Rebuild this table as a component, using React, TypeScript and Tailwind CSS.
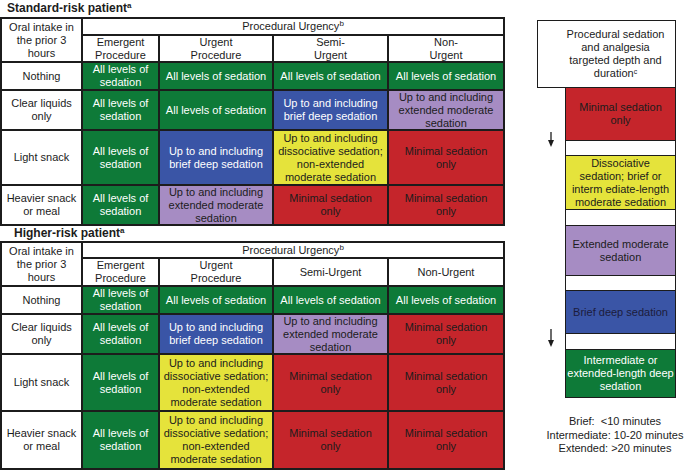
import React from 'react';

type Color = 'g' | 'b' | 'p' | 'y' | 'r' | 'w';

const C: Record<Color, string> = {
  g: 'bg-[#0e7a38] text-white',
  b: 'bg-[#3a55a6] text-white',
  p: 'bg-[#a68cc3] text-[#1c1c1c]',
  y: 'bg-[#e5e33b] text-[#1c1c1c]',
  r: 'bg-[#c5252b] text-[#1c1c1c]',
  w: 'bg-white text-[#1c1c1c]',
};

type CellDef = [Color, string[]];

const ALL: CellDef = ['g', ['All levels of', 'sedation']];
const ALL1: CellDef = ['g', ['All levels of sedation']];
const BLUE: CellDef = ['b', ['Up to and including', 'brief deep sedation']];
const PURP: CellDef = ['p', ['Up to and including', 'extended moderate', 'sedation']];
const YEL: CellDef = ['y', ['Up to and including', 'dissociative sedation;', 'non-extended', 'moderate sedation']];
const RED: CellDef = ['r', ['Minimal sedation', 'only']];

function Cell({ color, lines, extra = '' }: { color: Color; lines: string[]; extra?: string }) {
  return (
    <div className={`${C[color]} flex flex-col items-center justify-center text-center text-[11px] leading-[13px] whitespace-nowrap ${extra}`}>
      {lines.map((l, i) => (
        <span key={i}>{l}</span>
      ))}
    </div>
  );
}

function Table({
  rowsClass,
  sub,
  rows,
}: {
  rowsClass: string;
  sub: string[][];
  rows: { label: string[]; cells: CellDef[] }[];
}) {
  return (
    <div className={`grid grid-cols-[79px_75px_112px_113px_114px] ${rowsClass} gap-[2px] bg-[#1c1c1c] p-[2px] w-[505px]`}>
      <Cell color="w" lines={['Oral intake in', 'the prior 3', 'hours']} extra="row-span-2" />
      <div className="col-span-4 bg-white text-[#1c1c1c] flex items-center justify-center text-[11px] leading-[13px]">
        <span>
          Procedural Urgency<sup className="text-[8px]">b</sup>
        </span>
      </div>
      {sub.map((s, i) => (
        <Cell key={i} color="w" lines={s} />
      ))}
      {rows.map((r, i) => (
        <React.Fragment key={i}>
          <Cell color="w" lines={r.label} />
          {r.cells.map((c, j) => (
            <Cell key={j} color={c[0]} lines={c[1]} />
          ))}
        </React.Fragment>
      ))}
    </div>
  );
}

function Arrow({ h }: { h: number }) {
  return (
    <svg width="10" height={h} viewBox={`0 0 10 ${h}`}>
      <line x1="5" y1="0" x2="5" y2={h - 6} stroke="#1c1c1c" strokeWidth="1.3" />
      <polygon points={`2,${h - 7} 8,${h - 7} 5,${h}`} fill="#1c1c1c" />
    </svg>
  );
}

function Seg({ cls, h, lines, first = false }: { cls: string; h: string; lines?: string[]; first?: boolean }) {
  return (
    <div
      className={`${cls} ${h} ${first ? '' : 'border-t border-[#1c1c1c]'} flex flex-col items-center justify-center text-center text-[11px] leading-[13px] whitespace-nowrap`}
    >
      {lines?.map((l, i) => (
        <span key={i}>{l}</span>
      ))}
    </div>
  );
}

export default function App() {
  return (
    <div className="w-[685px] h-[470px] bg-white flex gap-[32px] font-['Liberation_Sans',Arial,sans-serif] text-[#1c1c1c] overflow-hidden">
      <div className="flex flex-col w-[505px]">
        <div className="h-[17px] pl-[7px] pt-[1px] text-[12px] leading-[15px] font-bold">
          Standard-risk patient<sup className="text-[8px]">a</sup>
        </div>
        <Table
          rowsClass="grid-rows-[15px_25px_26px_38px_53px_38px]"
          sub={[
            ['Emergent', 'Procedure'],
            ['Urgent', 'Procedure'],
            ['Semi-', 'Urgent'],
            ['Non-', 'Urgent'],
          ]}
          rows={[
            { label: ['Nothing'], cells: [ALL, ALL1, ALL1, ALL1] },
            { label: ['Clear liquids', 'only'], cells: [ALL, ALL1, BLUE, PURP] },
            { label: ['Light snack'], cells: [ALL, BLUE, YEL, RED] },
            { label: ['Heavier snack', 'or meal'], cells: [ALL, PURP, RED, RED] },
          ]}
        />
        <div className="h-[15px] pl-[14px] text-[12px] leading-[15px] font-bold">
          Higher-risk patient<sup className="text-[8px]">a</sup>
        </div>
        <Table
          rowsClass="grid-rows-[14px_26px_26px_38px_55px_56px]"
          sub={[['Emergent', 'Procedure'], ['Urgent', 'Procedure'], ['Semi-Urgent'], ['Non-Urgent']]}
          rows={[
            { label: ['Nothing'], cells: [ALL, ALL1, ALL1, ALL1] },
            { label: ['Clear liquids', 'only'], cells: [ALL, BLUE, PURP, RED] },
            { label: ['Light snack'], cells: [ALL, YEL, RED, RED] },
            { label: ['Heavier snack', 'or meal'], cells: [ALL, YEL, RED, RED] },
          ]}
        />
      </div>

      <div className="flex flex-col w-[139px] pt-[20px]">
        <div className="h-[68px] border border-[#1c1c1c] pl-[18px] flex flex-col items-center justify-center text-center text-[11px] leading-[13px] whitespace-nowrap">
          <span>Procedural sedation</span>
          <span>and analgesia</span>
          <span>targeted depth and</span>
          <span>
            duration<sup className="text-[7px]">c</sup>
          </span>
        </div>
        <div className="flex">
          <div className="w-[28px] flex flex-col items-center pt-[44px]">
            <Arrow h={15} />
            <div className="mt-[182px]">
              <Arrow h={18} />
            </div>
          </div>
          <div className="w-[111px] flex flex-col border-x border-b border-[#1c1c1c]">
            <Seg first cls={C.r} h="h-[52px]" lines={['Minimal sedation', 'only']} />
            <Seg cls="bg-white" h="h-[15px]" />
            <Seg cls={C.y} h="h-[54px]" lines={['Dissociative', 'sedation; brief or', 'interm ediate-length', 'moderate sedation']} />
            <Seg cls="bg-white" h="h-[16px]" />
            <Seg cls={C.p} h="h-[50px]" lines={['Extended moderate', 'sedation']} />
            <Seg cls="bg-white" h="h-[15px]" />
            <Seg cls="bg-[#3a55a6] text-[#1c1c3c]" h="h-[43px]" lines={['Brief deep sedation']} />
            <Seg cls="bg-white" h="h-[16px]" />
            <Seg cls={C.g} h="h-[48px]" lines={['Intermediate or', 'extended-length deep', 'sedation']} />
          </div>
        </div>
        <div className="mt-[17px] pl-[17px] flex flex-col items-center text-[11px] leading-[13.5px] whitespace-nowrap">
          <span>Brief:&nbsp; &lt;10 minutes</span>
          <span>Intermediate: 10-20 minutes</span>
          <span>Extended: &gt;20 minutes</span>
        </div>
      </div>
    </div>
  );
}
